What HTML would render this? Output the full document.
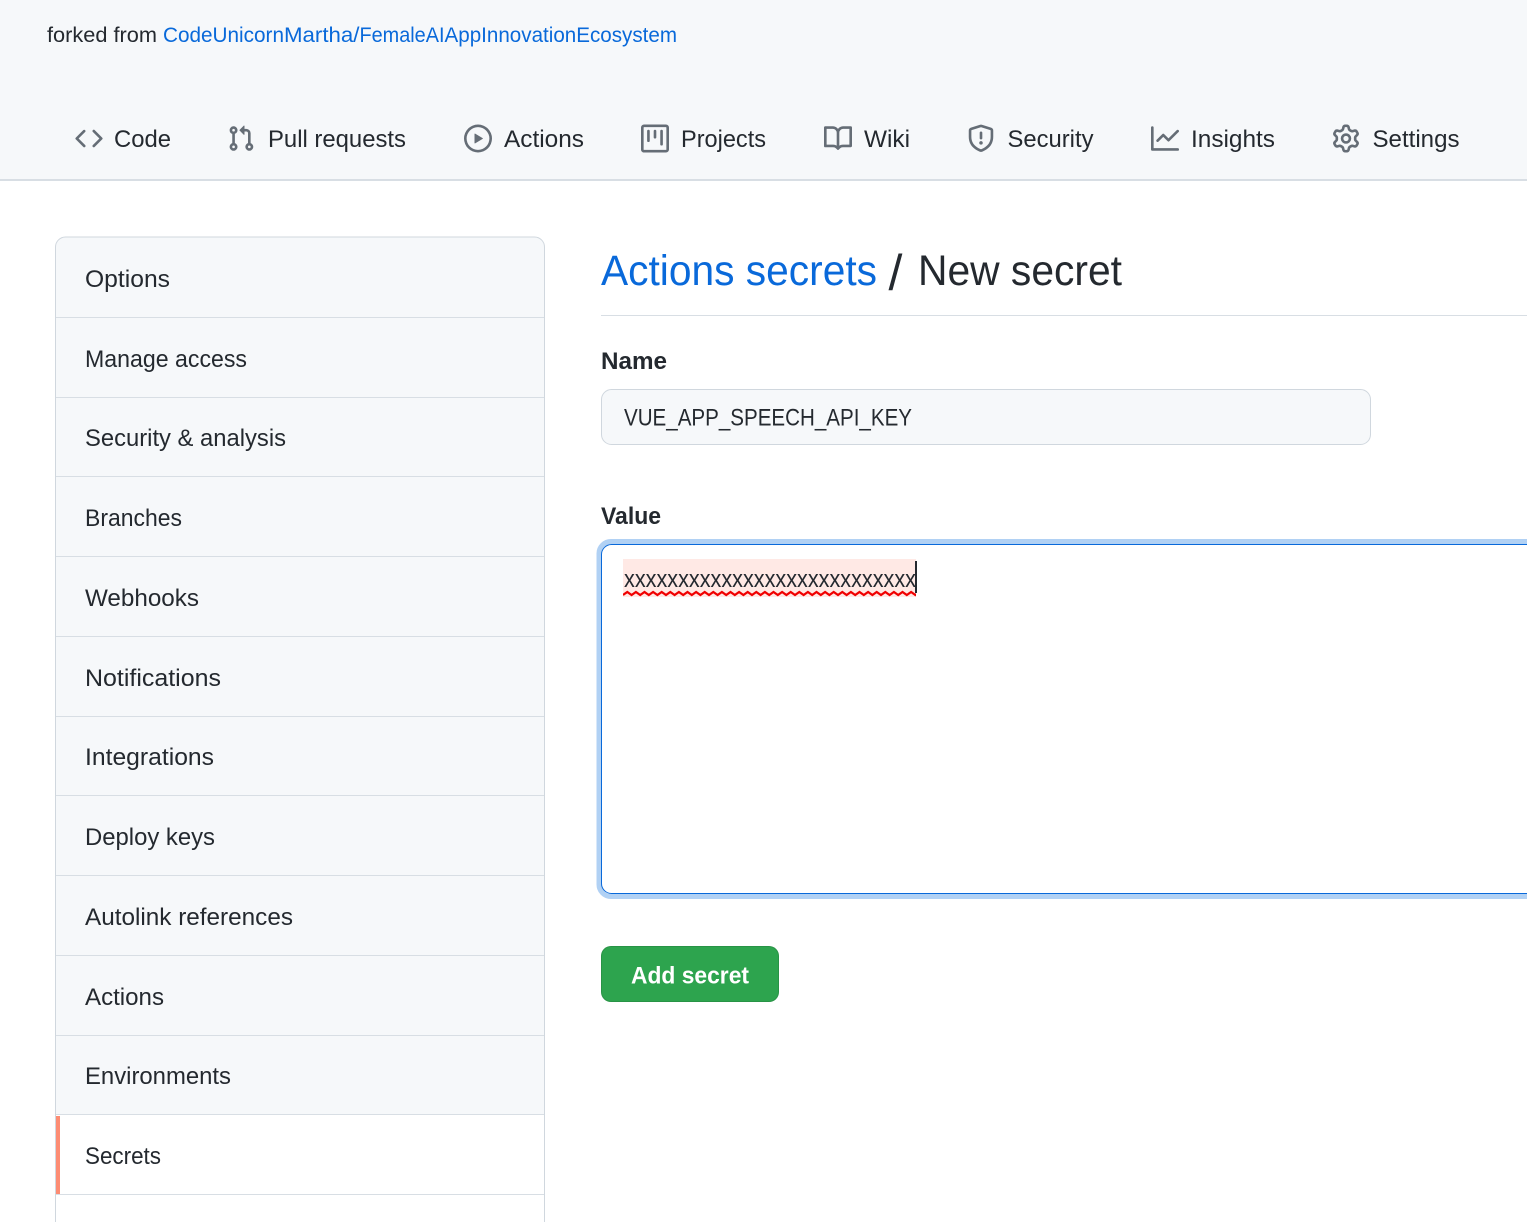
<!DOCTYPE html>
<html lang="en">
<head>
<meta charset="utf-8">
<title>Actions secrets / New secret</title>
<style>
html,body{margin:0;padding:0;background:#fff;width:1527px;height:1222px;overflow:hidden}
svg{display:block}
text{font-family:"Liberation Sans",sans-serif;fill:#24292f}
.n{font-size:24px}
.l{fill:#0969da}
.i{fill:#656d76}
</style>
</head>
<body>
<svg width="1527" height="1222" viewBox="0 0 1527 1222" xmlns="http://www.w3.org/2000/svg">
<defs><clipPath id="w"><rect x="623" y="585" width="293" height="12"/></clipPath></defs>
<rect width="1527" height="180" fill="#f6f8fa"/>
<rect y="179" width="1527" height="2" fill="#d8dee4"/>
<text x="47" y="42" font-size="21" textLength="110" lengthAdjust="spacingAndGlyphs">forked from</text>
<text x="163" y="42" font-size="21" class="l" textLength="121" lengthAdjust="spacingAndGlyphs">CodeUnicorn</text>
<text x="284" y="42" font-size="21" class="l" textLength="75.5" lengthAdjust="spacingAndGlyphs">Martha/</text>
<text x="359.5" y="42" font-size="21" class="l" textLength="85" lengthAdjust="spacingAndGlyphs">FemaleAI</text>
<text x="444.5" y="42" font-size="21" class="l" textLength="232.5" lengthAdjust="spacingAndGlyphs">AppInnovationEcosystem</text>

<g class="i">
<svg x="75" y="124.5" width="28" height="28" viewBox="0 0 16 16"><path fill-rule="evenodd" d="M4.72 3.22a.75.75 0 011.06 1.06L2.06 8l3.72 3.72a.75.75 0 11-1.06 1.06L.47 8.53a.75.75 0 010-1.06l4.25-4.25zm6.56 0a.75.75 0 10-1.06 1.06L13.94 8l-3.72 3.72a.75.75 0 101.06 1.06l4.25-4.25a.75.75 0 000-1.06l-4.25-4.25z"/></svg>
<svg x="227" y="124.5" width="28" height="28" viewBox="0 0 16 16"><path fill-rule="evenodd" d="M7.177 3.073L9.573.677A.25.25 0 0110 .854v4.792a.25.25 0 01-.427.177L7.177 3.427a.25.25 0 010-.354zM3.75 2.5a.75.75 0 100 1.5.75.75 0 000-1.5zm-2.25.75a2.25 2.25 0 113 2.122v5.256a2.251 2.251 0 11-1.5 0V5.372A2.25 2.25 0 011.5 3.25zM11 2.5h-1V4h1a1 1 0 011 1v5.628a2.251 2.251 0 101.5 0V5A2.5 2.5 0 0011 2.5zm1 10.25a.75.75 0 111.5 0 .75.75 0 01-1.5 0zM3.75 12a.75.75 0 100 1.5.75.75 0 000-1.5z"/></svg>
<svg x="464" y="124.5" width="28" height="28" viewBox="0 0 16 16"><path fill-rule="evenodd" d="M1.5 8a6.5 6.5 0 1113 0 6.5 6.5 0 01-13 0zM8 0a8 8 0 100 16A8 8 0 008 0zM6.379 5.227A.25.25 0 006 5.442v5.117a.25.25 0 00.379.214l4.264-2.559a.25.25 0 000-.428L6.379 5.227z"/></svg>
<svg x="641" y="124.5" width="28" height="28" viewBox="0 0 16 16"><path fill-rule="evenodd" d="M1.75 0A1.75 1.75 0 000 1.75v12.5C0 15.216.784 16 1.75 16h12.5A1.75 1.75 0 0016 14.25V1.75A1.75 1.75 0 0014.25 0H1.75zM1.5 1.75a.25.25 0 01.25-.25h12.5a.25.25 0 01.25.25v12.5a.25.25 0 01-.25.25H1.75a.25.25 0 01-.25-.25V1.75zM11.75 3a.75.75 0 00-.75.75v7.5a.75.75 0 001.5 0v-7.5a.75.75 0 00-.75-.75zm-8.25.75a.75.75 0 011.5 0v5.5a.75.75 0 01-1.5 0v-5.5zM8 3a.75.75 0 00-.75.75v3.5a.75.75 0 001.5 0v-3.5A.75.75 0 008 3z"/></svg>
<svg x="824" y="124.5" width="28" height="28" viewBox="0 0 16 16"><path fill-rule="evenodd" d="M0 1.75A.75.75 0 01.75 1h4.253c1.227 0 2.317.59 3 1.501A3.744 3.744 0 0111.006 1h4.245a.75.75 0 01.75.75v10.5a.75.75 0 01-.75.75h-4.507a2.25 2.25 0 00-1.591.659l-.622.621a.75.75 0 01-1.06 0l-.622-.621A2.25 2.25 0 005.258 13H.75a.75.75 0 01-.75-.75V1.75zm8.755 3a2.25 2.25 0 012.25-2.25H14.5v9h-3.757c-.71 0-1.4.201-1.992.572l.004-7.322zm-1.504 7.324l.004-5.073-.002-2.253A2.25 2.25 0 005.003 2.5H1.5v9h3.757a3.75 3.75 0 011.994.574z"/></svg>
<svg x="967" y="124.5" width="28" height="28" viewBox="0 0 16 16"><path fill-rule="evenodd" d="M7.467.133a1.75 1.75 0 011.066 0l5.25 1.68A1.75 1.75 0 0115 3.48V7c0 1.566-.32 3.182-1.303 4.682-.983 1.498-2.585 2.813-5.032 3.855a1.7 1.7 0 01-1.33 0c-2.447-1.042-4.049-2.357-5.032-3.855C1.32 10.182 1 8.566 1 7V3.48a1.75 1.75 0 011.217-1.667l5.25-1.68zm.61 1.429a.25.25 0 00-.153 0l-5.25 1.68a.25.25 0 00-.174.238V7c0 1.358.275 2.666 1.057 3.86.784 1.194 2.121 2.34 4.366 3.297a.2.2 0 00.154 0c2.245-.956 3.582-2.104 4.366-3.298C13.225 9.666 13.5 8.36 13.5 7V3.48a.25.25 0 00-.174-.237l-5.25-1.68zM9 10.5a1 1 0 11-2 0 1 1 0 012 0zm-.25-5.75a.75.75 0 10-1.5 0v3a.75.75 0 001.5 0v-3z"/></svg>
<svg x="1151" y="124.5" width="28" height="28" viewBox="0 0 16 16"><path fill-rule="evenodd" d="M1.5 1.75a.75.75 0 00-1.5 0v12.5c0 .414.336.75.75.75h14.5a.75.75 0 000-1.5H1.5V1.75zm14.28 2.53a.75.75 0 00-1.06-1.06L10 7.94 7.53 5.47a.75.75 0 00-1.06 0L3.22 8.72a.75.75 0 001.06 1.06L7 7.06l2.47 2.47a.75.75 0 001.06 0l5.25-5.25z"/></svg>
<svg x="1332" y="124.5" width="28" height="28" viewBox="0 0 16 16"><path fill-rule="evenodd" d="M7.429 1.525a6.593 6.593 0 011.142 0c.036.003.108.036.137.146l.289 1.105c.147.56.55.967.997 1.189.174.086.341.183.501.29.417.278.97.423 1.53.27l1.102-.303c.11-.03.175.016.195.046.219.31.41.641.573.989.014.031.022.11-.059.19l-.815.806c-.411.406-.562.957-.53 1.456a4.588 4.588 0 010 .582c-.032.499.119 1.05.53 1.456l.815.806c.08.08.073.159.059.19a6.494 6.494 0 01-.573.99c-.02.029-.086.074-.195.045l-1.103-.303c-.559-.153-1.112-.008-1.529.27-.16.107-.327.204-.5.29-.449.222-.851.628-.998 1.189l-.289 1.105c-.029.11-.101.143-.137.146a6.613 6.613 0 01-1.142 0c-.036-.003-.108-.037-.137-.146l-.289-1.105c-.147-.56-.55-.967-.997-1.189a4.502 4.502 0 01-.501-.29c-.417-.278-.97-.423-1.53-.27l-1.102.303c-.11.03-.175-.016-.195-.046a6.492 6.492 0 01-.573-.989c-.014-.031-.022-.11.059-.19l.815-.806c.411-.406.562-.957.53-1.456a4.587 4.587 0 010-.582c.032-.499-.119-1.05-.53-1.456l-.815-.806c-.08-.08-.073-.159-.059-.19a6.44 6.44 0 01.573-.99c.02-.029.086-.075.195-.045l1.103.303c.559.153 1.112.008 1.529-.27.16-.107.327-.204.5-.29.449-.222.851-.628.998-1.189l.289-1.105c.029-.11.101-.143.137-.146zM8 0c-.236 0-.47.01-.701.03-.743.065-1.29.615-1.458 1.261l-.29 1.106c-.017.066-.078.158-.211.224a5.994 5.994 0 00-.668.386c-.123.082-.233.09-.3.071L3.27 2.776c-.644-.177-1.392.02-1.82.63a7.977 7.977 0 00-.704 1.217c-.315.675-.111 1.422.363 1.891l.815.806c.05.048.098.147.088.294a6.084 6.084 0 000 .772c.01.147-.038.246-.088.294l-.815.806c-.474.469-.678 1.216-.363 1.891.2.428.436.835.704 1.218.428.609 1.176.806 1.82.63l1.103-.303c.066-.019.176-.011.299.071.213.143.436.272.668.386.133.066.194.158.212.224l.289 1.106c.169.646.715 1.196 1.458 1.26a8.094 8.094 0 001.402 0c.743-.064 1.29-.614 1.458-1.26l.29-1.106c.017-.066.078-.158.211-.224a5.98 5.98 0 00.668-.386c.123-.082.233-.09.3-.071l1.102.302c.644.177 1.392-.02 1.82-.63.268-.382.505-.789.704-1.217.315-.675.111-1.422-.364-1.891l-.814-.806c-.05-.048-.098-.147-.088-.294a6.1 6.1 0 000-.772c-.01-.147.039-.246.088-.294l.814-.806c.475-.469.679-1.216.364-1.891a7.992 7.992 0 00-.704-1.218c-.428-.609-1.176-.806-1.82-.63l-1.103.303c-.066.019-.176.011-.299-.071a5.991 5.991 0 00-.668-.386c-.133-.066-.194-.158-.212-.224L10.16 1.29C9.99.645 9.444.095 8.701.031A8.094 8.094 0 008 0zM11 8a3 3 0 11-6 0 3 3 0 016 0zM9.5 8a1.5 1.5 0 10-3 0 1.5 1.5 0 003 0z"/></svg>
</g>

<g class="n">
<text x="114" y="147" textLength="57" lengthAdjust="spacingAndGlyphs">Code</text>
<text x="268" y="147" textLength="138" lengthAdjust="spacingAndGlyphs">Pull requests</text>
<text x="504" y="147" textLength="80" lengthAdjust="spacingAndGlyphs">Actions</text>
<text x="681" y="147" textLength="85" lengthAdjust="spacingAndGlyphs">Projects</text>
<text x="864" y="147" textLength="46" lengthAdjust="spacingAndGlyphs">Wiki</text>
<text x="1007.5" y="147" textLength="86" lengthAdjust="spacingAndGlyphs">Security</text>
<text x="1191" y="147" textLength="84" lengthAdjust="spacingAndGlyphs">Insights</text>
<text x="1372.5" y="147" textLength="87" lengthAdjust="spacingAndGlyphs">Settings</text>
</g>

<!-- sidebar -->
<path d="M55.5 1223V247a10 10 0 0 1 10-10h469a10 10 0 0 1 10 10v976z" fill="#f6f8fa"/>
<rect x="56" y="1115" width="488" height="108" fill="#fff"/>
<path d="M55.5 1223V247a10 10 0 0 1 10-10h469a10 10 0 0 1 10 10v976" fill="none" stroke="#d0d7de"/>
<g fill="#d8dee4">
<rect x="56" y="317" width="488" height="1"/>
<rect x="56" y="397" width="488" height="1"/>
<rect x="56" y="476" width="488" height="1"/>
<rect x="56" y="556" width="488" height="1"/>
<rect x="56" y="636" width="488" height="1"/>
<rect x="56" y="716" width="488" height="1"/>
<rect x="56" y="795" width="488" height="1"/>
<rect x="56" y="875" width="488" height="1"/>
<rect x="56" y="955" width="488" height="1"/>
<rect x="56" y="1035" width="488" height="1"/>
<rect x="56" y="1114" width="488" height="1"/>
<rect x="56" y="1194" width="488" height="1"/>
</g>
<rect x="56" y="1116" width="4" height="78" fill="#fd8c73"/>
<g class="n">
<text x="85" y="287" textLength="85" lengthAdjust="spacingAndGlyphs">Options</text>
<text x="85" y="367" textLength="162" lengthAdjust="spacingAndGlyphs">Manage access</text>
<text x="85" y="446" textLength="201" lengthAdjust="spacingAndGlyphs">Security &amp; analysis</text>
<text x="85" y="526" textLength="97" lengthAdjust="spacingAndGlyphs">Branches</text>
<text x="85" y="606" textLength="114" lengthAdjust="spacingAndGlyphs">Webhooks</text>
<text x="85" y="686" textLength="136" lengthAdjust="spacingAndGlyphs">Notifications</text>
<text x="85" y="765" textLength="129" lengthAdjust="spacingAndGlyphs">Integrations</text>
<text x="85" y="845" textLength="130" lengthAdjust="spacingAndGlyphs">Deploy keys</text>
<text x="85" y="925" textLength="208" lengthAdjust="spacingAndGlyphs">Autolink references</text>
<text x="85" y="1005" textLength="79" lengthAdjust="spacingAndGlyphs">Actions</text>
<text x="85" y="1084" textLength="146" lengthAdjust="spacingAndGlyphs">Environments</text>
<text x="85" y="1164" textLength="76" lengthAdjust="spacingAndGlyphs">Secrets</text>
</g>

<!-- main -->
<text x="601" y="285" font-size="43" class="l" textLength="276" lengthAdjust="spacingAndGlyphs">Actions secrets</text>
<text x="888.5" y="290" font-size="50">/</text>
<text x="918" y="285" font-size="43" textLength="204" lengthAdjust="spacingAndGlyphs">New secret</text>
<rect x="601" y="315" width="926" height="1" fill="#d8dee4"/>

<text x="601" y="369" font-size="24" font-weight="700" textLength="66" lengthAdjust="spacingAndGlyphs">Name</text>
<rect x="601.5" y="389.5" width="769" height="55" rx="10" fill="#f6f8fa" stroke="#d0d7de"/>
<text x="624" y="425.5" font-size="24" textLength="288" lengthAdjust="spacingAndGlyphs">VUE_APP_SPEECH_API_KEY</text>

<text x="601" y="524" font-size="24" font-weight="700" textLength="60" lengthAdjust="spacingAndGlyphs">Value</text>

<rect x="599" y="541.5" width="1000" height="355" rx="12" fill="#fff" stroke="#b1d1f4" stroke-width="5"/>
<rect x="601.5" y="544.5" width="1000" height="349" rx="10" fill="#fff" stroke="#0969da"/>

<rect x="623" y="559" width="293" height="38" fill="#ffe9e5"/>
<text x="624" y="587" font-size="24" textLength="292" lengthAdjust="spacingAndGlyphs">xxxxxxxxxxxxxxxxxxxxxxxxxxx</text>
<path clip-path="url(#w)" fill="none" stroke="#f00000" stroke-width="2.2" d="M623 595l4.3-3 4.3 3 4.3-3 4.3 3 4.3-3 4.3 3 4.3-3 4.3 3 4.3-3 4.3 3 4.3-3 4.3 3 4.3-3 4.3 3 4.3-3 4.3 3 4.3-3 4.3 3 4.3-3 4.3 3 4.3-3 4.3 3 4.3-3 4.3 3 4.3-3 4.3 3 4.3-3 4.3 3 4.3-3 4.3 3 4.3-3 4.3 3 4.3-3 4.3 3 4.3-3 4.3 3 4.3-3 4.3 3 4.3-3 4.3 3 4.3-3 4.3 3 4.3-3 4.3 3 4.3-3 4.3 3 4.3-3 4.3 3 4.3-3 4.3 3 4.3-3 4.3 3 4.3-3 4.3 3 4.3-3 4.3 3 4.3-3 4.3 3 4.3-3 4.3 3 4.3-3 4.3 3 4.3-3 4.3 3 4.3-3 4.3 3 4.3-3 4.3 3 4.3-3"/>
<rect x="915" y="561" width="2" height="32" fill="#24292f"/>

<rect x="601" y="946" width="178" height="56" rx="10" fill="#2da44e"/>
<rect x="601.5" y="946.5" width="177" height="55" rx="9.5" fill="none" stroke="#000" stroke-opacity=".1"/>
<text x="631" y="983.5" font-size="24" font-weight="700" style="fill:#fff" textLength="118" lengthAdjust="spacingAndGlyphs">Add secret</text>
</svg>
</body>
</html>
